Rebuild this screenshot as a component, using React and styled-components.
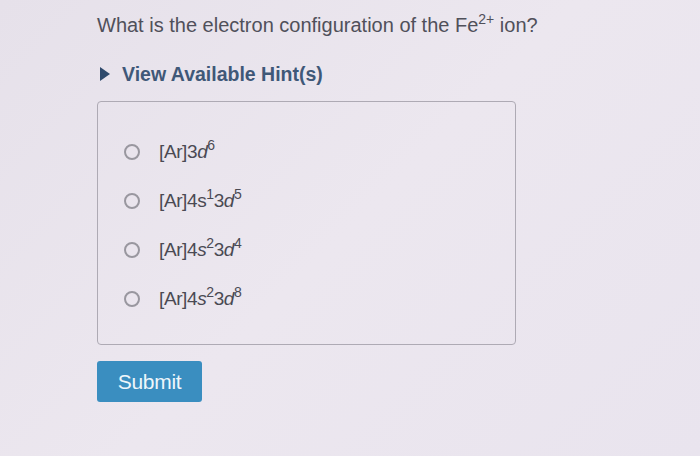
import React, { useState } from "react"
import { styled, createGlobalStyle } from "styled-components"

const GlobalStyle = createGlobalStyle`
  html, body {
    margin: 0;
    padding: 0;
    background: #e8e3ec;
  }
  body {
    font-family: "Liberation Sans", Arial, sans-serif;
  }
`

const options = [
  { id: "a", base: "[Ar]3", parts: [["d", "6"]] },
  { id: "b", base: "[Ar]4", parts: [["s", "1", true], ["3"], ["d", "5"]] },
  { id: "c", base: "[Ar]4", parts: [["s", "2"], ["3"], ["d", "4"]] },
  { id: "d", base: "[Ar]4", parts: [["s", "2"], ["3"], ["d", "8"]] },
]

export default function App() {
  const [picked, setPicked] = useState("")
  return (
    <>
      <GlobalStyle />
      <Page>
        <Question>
          What is the electron configuration of the Fe<sup>2+</sup> ion?
        </Question>
        <HintToggle>
          <Arrow />
          View Available Hint(s)
        </HintToggle>
        <ChoiceBox>
          {options.map((o) => (
            <Choice key={o.id} onClick={() => setPicked(o.id)}>
              <Radio $on={picked === o.id} />
              <Label>
                {o.base}
                {o.parts.map(([t, sup, upright], i) => (
                  <React.Fragment key={i}>
                    {sup ? (upright ? t : <i>{t}</i>) : t}
                    {sup && <sup>{sup}</sup>}
                  </React.Fragment>
                ))}
              </Label>
            </Choice>
          ))}
        </ChoiceBox>
        <SubmitButton>Submit</SubmitButton>
      </Page>
    </>
  )
}

const Page = styled.div`
  width: 700px;
  height: 456px;
  box-sizing: border-box;
  padding: 13px 0 0 97px;
  background: linear-gradient(135deg, #e6e1ea 0%, #ece7ef 50%, #e9e4ee 100%);
  overflow: hidden;
`

const Question = styled.div`
  font-size: 20px;
  color: #50505a;
  line-height: 24px;

  sup {
    font-size: 14px;
    line-height: 0;
    vertical-align: 8px;
  }
`

const HintToggle = styled.div`
  display: flex;
  align-items: center;
  gap: 12px;
  margin: 26px 0 0 3px;
  font-size: 19.5px;
  font-weight: bold;
  color: #3f5878;
  line-height: 22px;
  cursor: pointer;
`

const Arrow = styled.span`
  width: 0;
  height: 0;
  border-top: 7px solid transparent;
  border-bottom: 7px solid transparent;
  border-left: 10px solid #2f4a6c;
`

const ChoiceBox = styled.div`
  width: 419px;
  height: 244px;
  box-sizing: border-box;
  margin-top: 16px;
  border: 1px solid #aeaab4;
  border-radius: 4px;
  padding: 39px 0 0 26px;
  display: flex;
  flex-direction: column;
  gap: 27px;
`

const Choice = styled.label`
  display: flex;
  align-items: center;
  gap: 19px;
  height: 22px;
  cursor: pointer;
`

const Radio = styled.span`
  width: 12px;
  height: 12px;
  border-radius: 50%;
  border: 2px solid #99979f;
  background: ${(p) => (p.$on ? "radial-gradient(#3b8fc1 40%, transparent 45%)" : "transparent")};
`

const Label = styled.span`
  font-size: 19px;
  color: #4a4a53;
  letter-spacing: -0.4px;

  sup {
    font-size: 14px;
    line-height: 0;
    vertical-align: 8px;
  }
`

const SubmitButton = styled.button`
  display: block;
  margin-top: 16px;
  width: 105px;
  height: 41px;
  border: none;
  border-radius: 3px;
  background: #3a8ec0;
  color: #eef6fb;
  font-family: "Liberation Sans", Arial, sans-serif;
  font-size: 21px;
  letter-spacing: -0.3px;
  cursor: pointer;
`
